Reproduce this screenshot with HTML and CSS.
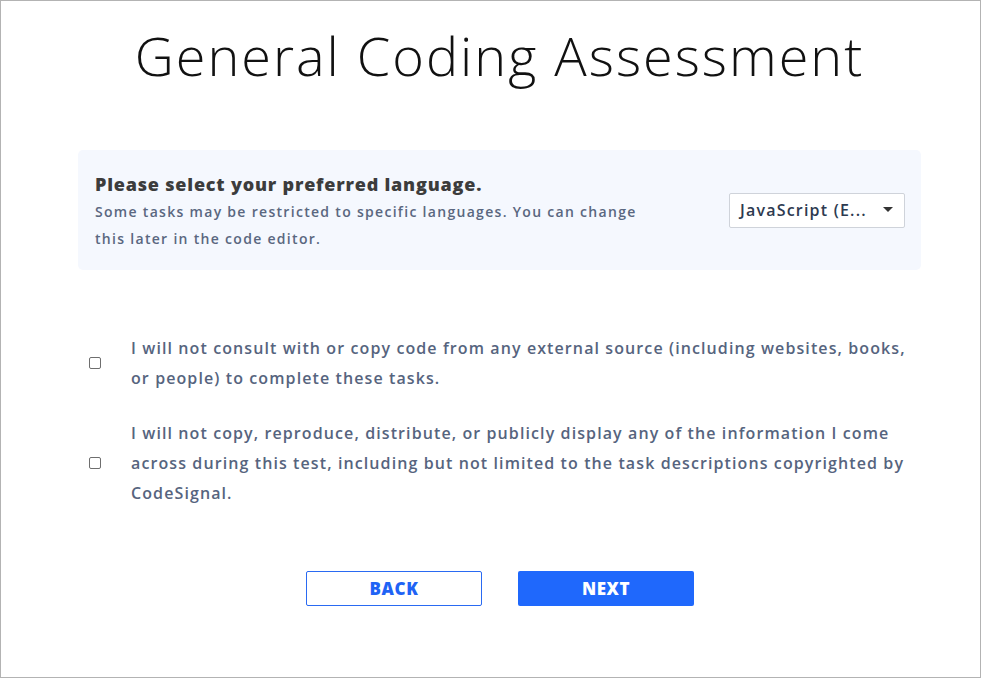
FILE: index.html
```html
<!DOCTYPE html>
<html lang="en">
<head>
    <meta charset="UTF-8">
    <title>General Coding Assessment</title>
    <link rel="stylesheet" href="styles.css">
</head>
<body>
    <div class="frame">
        <div class="page">
            <h1 class="title">General Coding Assessment</h1>

            <div class="lang-panel">
                <div class="lang-text">
                    <h2>Please select your preferred language.</h2>
                    <p>Some tasks may be restricted to specific languages. You can change this later in the code editor.</p>
                </div>
                <div class="select">
                    <span class="select-value">JavaScript (E...</span>
                    <svg class="caret" width="10" height="6" viewBox="0 0 10 6"><path d="M0 0h10L5 5z" fill="#333"/></svg>
                </div>
            </div>

            <div class="agreements">
                <label class="agree">
                    <span class="box"></span>
                    <span class="agree-text">I will not consult with or copy code from any external source (including websites, books, or people) to complete these tasks.</span>
                </label>
                <label class="agree">
                    <span class="box"></span>
                    <span class="agree-text">I will not copy, reproduce, distribute, or publicly display any of the information I come across during this test, including but not limited to the task descriptions copyrighted by CodeSignal.</span>
                </label>
            </div>

            <div class="actions">
                <button class="btn outline">BACK</button>
                <button class="btn solid">NEXT</button>
            </div>
        </div>
    </div>
</body>
</html>
```

FILE: styles.css
```css
html, body { margin: 0; padding: 0; background: #fff; }
body { font-family: "Open Sans", "Liberation Sans", sans-serif; }
.frame { width: 981px; height: 678px; box-sizing: border-box; border: 1px solid #b3b3b3; overflow: hidden; }
.page { width: 843px; margin-left: 77px; }

.title { margin: 19px 0 0; font-size: 54px; font-weight: 300; color: #111; text-align: center; line-height: 70px; letter-spacing: 2px; }

.lang-panel { margin-top: 60px; height: 120px; box-sizing: border-box; background: #f5f8fe; border-radius: 5px; padding: 0 16px 0 17px; display: flex; align-items: center; justify-content: space-between; }
.lang-text { padding-top: 4px; }
.lang-text h2 { margin: 0; font-size: 18px; font-weight: 800; color: #3c3c3c; line-height: 24px; letter-spacing: 0.8px; }
.lang-text p { margin: 2px 0 0; width: 560px; font-size: 14px; font-weight: 600; color: #5a6780; line-height: 27px; letter-spacing: 1.3px; }

.select { width: 176px; height: 35px; box-sizing: border-box; background: #fff; border: 1px solid #cfd3da; border-radius: 2px; display: flex; align-items: center; justify-content: space-between; padding: 0 11px 0 10px; }
.select-value { font-size: 16px; font-weight: 600; color: #2d3a50; letter-spacing: 1.2px; }
.caret { display: block; }

.agreements { margin-top: 63px; display: flex; flex-direction: column; gap: 25px; }
.agree { display: flex; align-items: center; }
.box { flex: none; width: 10px; height: 10px; border: 1.5px solid #6e6e6e; border-radius: 2px; margin: 0 30px 0 11px; }
.agree-text { font-size: 16px; font-weight: 600; color: #56647e; line-height: 30px; letter-spacing: 1.1px; }

.actions { margin-top: 63px; display: flex; justify-content: center; gap: 36px; padding-left: 1px; }
.btn { width: 176px; height: 35px; font-family: inherit; font-size: 17px; font-weight: 800; border-radius: 2px; letter-spacing: 0.6px; cursor: pointer; }
.outline { background: #fff; color: #1f63f5; border: 1px solid #2a6af2; }
.solid { background: #1f68fc; color: #fff; border: none; }
```
